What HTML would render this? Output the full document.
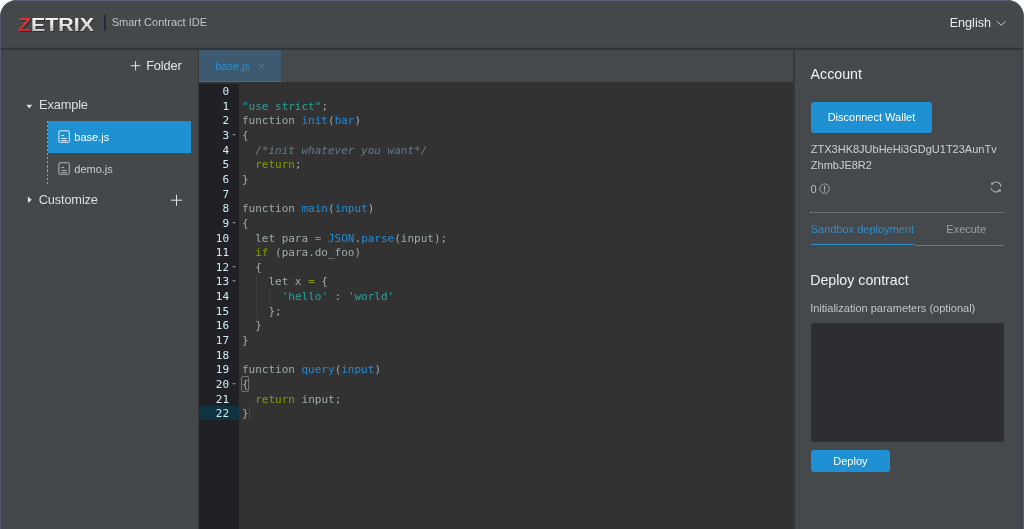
<!DOCTYPE html>
<html lang="en">
<head>
<meta charset="utf-8">
<title>Zetrix Smart Contract IDE</title>
<style>
*{box-sizing:border-box;margin:0;padding:0}
html,body{width:1024px;height:529px;overflow:hidden;background:#fff}
body{font-family:"Liberation Sans",Arial,sans-serif;color:#e4e4e4;position:relative}
.app{position:absolute;left:0;top:0;width:1024px;height:560px;background:#44484b;border-radius:16.5px 16.5px 0 0;overflow:hidden}
.frame{position:absolute;left:0;top:0;width:1024px;height:560px;border-radius:16.5px 16.5px 0 0;border:1px solid #5a5f75;border-left-color:#53586c;border-right-color:#55596d;border-bottom:none;pointer-events:none}
.abs{position:absolute;white-space:nowrap;line-height:1}
.fg{position:absolute;left:0;top:0;width:1024px;height:560px;will-change:transform}
/* header */
.hdrline{position:absolute;left:0;top:47.5px;width:1024px;height:2px;background:#333435;box-shadow:0 0 1px #333435}
.logo{position:absolute;left:14px;top:10px}
.divider{position:absolute;left:104.2px;top:14.8px;width:1.6px;height:16px;background:#262842}
.title{left:111.7px;top:16.7px;font-size:11px;color:#c4c4c4}
.lang{left:949.7px;top:17.4px;font-size:12.6px;color:#ececec}
.chev{position:absolute;left:995px;top:19px}
/* sidebar */
.side{position:absolute;left:0;top:49.5px;width:198.5px;height:520px;background:#44484b}
.sideborder{position:absolute;left:198px;top:49.5px;width:1.4px;height:520px;background:#35373a}
.folder{left:146.2px;top:60px;font-size:12.8px;letter-spacing:-0.15px;color:#e6e6e6}
.tree{font-size:12.8px;letter-spacing:-0.15px;color:#dedede}
.sel{position:absolute;left:47.5px;top:121px;width:143.5px;height:31.6px;background:#1f90d1}
.dots{position:absolute;left:47.2px;top:121.3px;width:1.2px;height:62.8px;background:repeating-linear-gradient(to bottom,#9a9c9e 0,#9a9c9e 2.1px,transparent 2.1px,transparent 4.04px)}
.file{font-size:11px}
/* editor */
.tabbar{position:absolute;left:199.4px;top:49.5px;width:593.5px;height:32.2px;background:#45494c}
.tab{position:absolute;left:0;top:0;width:81.6px;height:32.2px;background:#3e5a70;border-bottom:1.8px solid #2c79ab}
.tabline{position:absolute;left:199.4px;top:81.7px;width:594px;height:2.4px;background:#323232}
.editor{position:absolute;left:199.4px;top:84px;width:593.5px;height:460px;background:#323232}
.gutter{position:absolute;left:0;top:0;width:39.3px;height:460px;background:#212125}
.gactive{position:absolute;left:0;top:321.7px;width:39.3px;height:14.6px;background:#0d3440}
pre{font-family:"DejaVu Sans Mono","Liberation Mono",monospace;font-size:11px;line-height:14.64px;white-space:pre}
.nums{position:absolute;width:29.7px;text-align:right;color:#d0edf7}
.code{position:absolute;color:#9eabab}
.k{color:#859900}.f{color:#268bd2}.s{color:#2aa198}.c{color:#657b83;font-style:italic}
.fold{position:absolute;left:32.3px;width:0;height:0;border-left:2px solid transparent;border-right:2px solid transparent;border-top:2.2px solid #7b7f82}
.guide{position:absolute;width:1px;background:#393e3f}
.bracket{position:absolute;border:1px solid rgba(147,161,161,.6);border-radius:2px}
.cursor{position:absolute;width:1px;background:#852b2b}
/* right panel */
.right{position:absolute;left:794.7px;top:49.5px;width:231px;height:520px;background:#45494c;box-shadow:-1.9px 0 0 #353638}
.scroll{position:absolute;left:1019px;top:49.5px;width:4px;height:520px;background:#45454d}
.h{font-size:14.2px;color:#f2f2f2}
.btn{position:absolute;background:#1f90d1;border-radius:3px;color:#fff;font-size:11px;text-align:center}
.t11{font-size:11px}
.btxt{font-size:11px;color:#fff;text-align:center}
.dash{position:absolute;left:810px;top:212px;width:194px;height:1px;background:repeating-linear-gradient(to right,#787b7e 0,#787b7e 3px,transparent 3px,transparent 4px)}
.ta{position:absolute;left:810.9px;top:323px;width:192.8px;height:118.8px;background:#2e2e32;border-radius:3px}
</style>
</head>
<body>
<div class="app">
  <div class="divider"></div>
  <div class="hdrline"></div>
  <div class="side"></div>
  <div class="sideborder"></div>
  <div class="sel"></div>
  <div class="dots"></div>
  <div class="tabbar">
    <div class="tab"></div>
  </div>
  <div class="tabline"></div>
  <div class="editor">
    <div class="gutter"></div>
    <div class="gactive"></div>
    <i class="fold" style="top:50px"></i>
    <i class="fold" style="top:137.7px"></i>
    <i class="fold" style="top:181.6px"></i>
    <i class="fold" style="top:196.2px"></i>
    <i class="fold" style="top:298.5px"></i>
    <i class="guide" style="left:56.5px;top:190px;height:44px"></i>
    <i class="guide" style="left:56.5px;top:204.7px;height:29.2px"></i>
    <i class="guide" style="left:69.7px;top:204.7px;height:14.6px"></i>
    <i class="bracket" style="left:42px;top:292.2px;width:8px;height:15.4px"></i>
    <i class="cursor" style="left:49.8px;top:321.7px;height:14.6px"></i>
  </div>
  <div class="right"></div>
  <div class="scroll"></div>
  <div class="btn" style="left:810.9px;top:101.6px;width:121.1px;height:31.6px;line-height:31.6px"></div>
  <div class="dash"></div>
  <div class="abs" style="left:914.5px;top:244.5px;width:89.1px;height:1px;background:#74787b"></div>
  <div class="abs" style="left:810.8px;top:243.6px;width:103.7px;height:1.9px;background:#2a8fd0"></div>
  <div class="ta"></div>
  <div class="btn" style="left:810.9px;top:450px;width:79.1px;height:22px;line-height:23.2px"></div>
  <div class="fg">
  <svg class="logo" width="90" height="28" viewBox="0 0 90 28">
    <defs>
      <linearGradient id="gm" x1="0" y1="0" x2="0" y2="1"><stop offset="0" stop-color="#ffffff"/><stop offset=".5" stop-color="#e2e2e2"/><stop offset="1" stop-color="#a8a8a8"/></linearGradient>
      <linearGradient id="gr" x1="0" y1="0" x2="0" y2="1"><stop offset="0" stop-color="#e23a41"/><stop offset="1" stop-color="#c4242c"/></linearGradient>
    </defs>
    <g font-family="Liberation Sans, Arial, sans-serif" font-weight="bold" font-size="18.3">
      <text x="4.9" y="21.9" fill="#2c2e30" textLength="76" lengthAdjust="spacingAndGlyphs">ZETRIX</text>
      <text x="3.9" y="20.9" textLength="76" lengthAdjust="spacingAndGlyphs"><tspan fill="url(#gr)">Z</tspan><tspan fill="url(#gm)">ETRIX</tspan></text>
    </g>
  </svg>
  <div class="abs title">Smart Contract IDE</div>
  <div class="abs lang">English</div>
  <svg class="chev" width="13" height="10" viewBox="0 0 13 10"><path d="M1.7 2.2 L6.2 6.3 L10.7 2.2" fill="none" stroke="#d2d2d2" stroke-width=".95"/></svg>
  <svg class="abs" style="left:130px;top:60px" width="12" height="12" viewBox="0 0 12 12"><path d="M5.6 1v9.4M0.9 5.7h9.4" stroke="#e6e6e6" stroke-width="1" fill="none"/></svg>
  <div class="abs folder">Folder</div>
  <svg class="abs" style="left:26px;top:103.5px" width="8" height="6" viewBox="0 0 8 6"><path d="M0.4 0.8h5.8L3.3 4.6z" fill="#e0e0e0"/></svg>
  <div class="abs tree" style="left:39.1px;top:99.3px">Example</div>
  <svg class="abs" style="left:57.8px;top:130px" width="12" height="14" viewBox="0 0 12 14"><rect x="0.9" y="0.8" width="10.4" height="11.5" rx=".8" fill="none" stroke="#eef6fb" stroke-width=".95"/><path d="M3.4 5.5h2.7M3.4 8.5h5.3M3.4 10.5h5.3" stroke="#eef6fb" stroke-width=".9"/></svg>
  <div class="abs file" style="left:74.3px;top:131.8px;color:#fff">base.js</div>
  <svg class="abs" style="left:57.8px;top:162px" width="12" height="14" viewBox="0 0 12 14"><rect x="0.9" y="0.8" width="10.4" height="11.5" rx=".8" fill="none" stroke="#b9b9b9" stroke-width=".95"/><path d="M3.4 5.5h2.7M3.4 8.5h5.3M3.4 10.5h5.3" stroke="#b9b9b9" stroke-width=".9"/></svg>
  <div class="abs file" style="left:74.3px;top:163.5px;color:#cdcdcd">demo.js</div>
  <svg class="abs" style="left:27px;top:196px" width="6" height="8" viewBox="0 0 6 8"><path d="M0.9 0.6v6.3L4.8 3.75z" fill="#e0e0e0"/></svg>
  <div class="abs tree" style="left:38.7px;top:194px">Customize</div>
  <svg class="abs" style="left:170px;top:193.5px" width="13" height="13" viewBox="0 0 13 13"><path d="M6.5 0.7v11.1M0.9 6.2h11.1" stroke="#e0e0e0" stroke-width="1" fill="none"/></svg>
  <div class="abs" style="left:215.2px;top:60.8px;font-size:11px;color:#2a8fd0">base.js</div>
  <svg class="abs" style="left:258px;top:63px" width="8" height="8" viewBox="0 0 8 8"><path d="M1.1 1.1l4.8 4.8M5.9 1.1L1.1 5.9" stroke="#2a8fd0" stroke-width=".9" fill="none"/></svg>
  <div class="abs h" style="left:810.6px;top:66.6px">Account</div>
  <div class="abs t11" style="left:810.8px;top:141.3px;line-height:16.1px;color:#d0d0d0">ZTX3HK8JUbHeHi3GDgU1T23AunTv<br>ZhmbJE8R2</div>
  <div class="abs t11" style="left:810.6px;top:184.3px;color:#bcbcbc">0</div>
  <svg class="abs" style="left:819.1px;top:182.7px" width="12" height="12" viewBox="0 0 12 12"><circle cx="5.6" cy="5.6" r="4.7" fill="none" stroke="#adadad" stroke-width=".9"/><path d="M5.6 3v3.6" stroke="#c4c4c4" stroke-width="1"/><circle cx="5.6" cy="7.9" r=".6" fill="#c4c4c4"/></svg>
  <svg class="abs" style="left:988.9px;top:180.3px" width="14" height="14" viewBox="0 0 14 14"><g fill="none" stroke="#b0b0b0" stroke-width="1.05"><path d="M11.99 6.74A5 5 0 0 0 3.4 3.5"/><path d="M2.05 7.7A5 5 0 0 0 10.3 10.75"/></g><path d="M2 2.4L4.9 3.3L2.7 5.5z" fill="#b8b8b8"/><path d="M12 11.6L9.1 10.7L11.3 8.5z" fill="#b8b8b8"/></svg>
  <div class="abs t11" style="left:810.7px;top:223.7px;color:#2a8fd0">Sandbox deployment</div>
  <div class="abs t11" style="left:946.3px;top:223.7px;color:#9da0a2">Execute</div>
  <div class="abs h" style="left:810.2px;top:272.95px">Deploy contract</div>
  <div class="abs t11" style="left:810.2px;top:302.7px;color:#c3c3c3">Initialization parameters (optional)</div>
  <div class="abs btxt" style="left:810.9px;top:101.6px;width:121.1px;line-height:31.4px">Disconnect Wallet</div>
  <div class="abs btxt" style="left:810.9px;top:450px;width:79.1px;line-height:23.2px">Deploy</div>
<pre class="nums" style="left:199.4px;top:85.1px">0
1
2
3
4
5
6
7
8
9
10
11
12
13
14
15
16
17
18
19
20
21
22</pre>
<pre class="code" style="left:241.9px;top:85.1px">

<span class="s">"use strict"</span>;
function <span class="f">init</span>(<span class="f">bar</span>)
{
  <span class="c">/*init whatever you want*/</span>
  <span class="k">return</span>;
}

function <span class="f">main</span>(<span class="f">input</span>)
{
  let para <span class="k">=</span> <span class="f">JSON</span>.<span class="f">parse</span>(input);
  <span class="k">if</span> (para.do_foo)
  {
    let x <span class="k">=</span> {
      <span class="s">'hello'</span> : <span class="s">'world'</span>
    };
  }
}

function <span class="f">query</span>(<span class="f">input</span>)
{
  <span class="k">return</span> input;
}</pre>
  </div>
  <div class="frame"></div>
</div>
</body>
</html>
